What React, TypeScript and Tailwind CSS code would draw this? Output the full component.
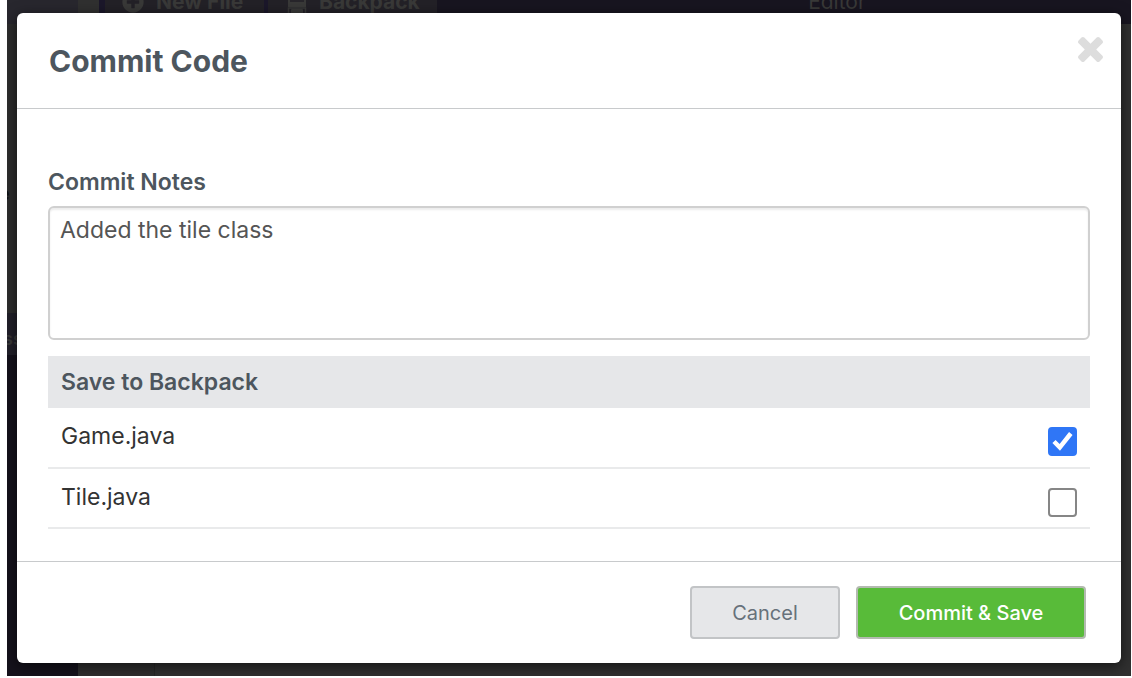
import React, { useState } from 'react';
import { FaPlusCircle } from 'react-icons/fa';

const initialFiles = [
  { name: 'Game.java', checked: true },
  { name: 'Tile.java', checked: false },
];

const CloseIcon = () => (
  <svg viewBox="302 366 1188 1188" className="size-[25px]" fill="currentColor" aria-hidden="true">
    <path d="M1490 1322q0 40-28 68l-136 136q-28 28-68 28t-68-28l-294-294-294 294q-28 28-68 28t-68-28l-136-136q-28-28-28-68t28-68l294-294-294-294q-28-28-28-68t28-68l136-136q28-28 68-28t68 28l294 294 294-294q28-28 68-28t68 28l136 136q28 28 28 68t-28 68l-294 294 294 294q28 28 28 68z" />
  </svg>
);

const BackpackIcon = () => (
  <svg viewBox="0 0 20 24" className="h-6 w-5" fill="none" aria-hidden="true">
    <path d="M4 2Q10 -1 16 2L19 8V17H1V8Z" fill="currentColor" />
    <path d="M3 11H17" stroke="#232127" strokeWidth="1.5" />
    <path d="M1.500 24V18H18.500V24" stroke="currentColor" strokeWidth="1.5" />
    <path d="M4 24V20Q4 19 5 19H15Q16 19 16 20V24Z" fill="currentColor" />
  </svg>
);

const EditorBackground = () => (
  <div className="-mt-5 flex h-[calc(100%+20px)] flex-col text-[#393938]" aria-hidden="true">
    <div className="flex h-11 shrink-0 bg-[#181520] text-[21px] font-bold">
      <div className="w-[71px] bg-[#28272e]" />
      <div className="w-[21px] bg-[#303030]" />
      <div className="w-1.5 bg-[#1b172a]" />
      <div className="flex w-[159px] items-center gap-3 bg-[#232127] pl-[17px]">
        <FaPlusCircle className="size-[22px]" />
        New File
      </div>
      <div className="w-1 bg-[#1b172a]" />
      <div className="flex w-[169px] items-center gap-3 bg-[#232127] pl-[19px]">
        <BackpackIcon />
        Backpack
      </div>
      <div className="flex flex-1 items-center justify-center pl-[106px] font-normal">Editor</div>
    </div>
    <div className="flex flex-1 bg-[#303030]">
      <div className="flex w-[71px] flex-col overflow-hidden bg-[#15121c] text-lg leading-6 font-semibold">
        <div className="h-[289px] bg-[#2d2d2d] pt-[158px]">
          <span className="-ml-2 text-[#111]">e</span>
        </div>
        <div className="h-[42px] bg-[#22202a] pt-[14px]">
          <span className="-ml-1">ss</span>
        </div>
      </div>
      <div className="w-[77px] border-r border-[#272727] bg-[#2e2e2e]" />
    </div>
  </div>
);

const App = () => {
  const [notes, setNotes] = useState('Added the tile class');
  const [files, setFiles] = useState(initialFiles);

  const toggleFile = (name: string) =>
    setFiles(files.map((file) => (file.name === name ? { ...file, checked: !file.checked } : file)));

  return (
    <div className="h-screen bg-white pr-px pb-0.5 pl-[7px] font-['Inter',sans-serif]">
      <div className="relative h-full overflow-hidden">
        <EditorBackground />
        <div
          role="dialog"
          aria-labelledby="commit-title"
          className="absolute inset-x-2.5 top-[13px] rounded-md bg-white shadow-[0_3px_14px_rgba(0,0,0,0.6)]"
        >
          <div className="flex items-start justify-between border-b border-[#c8cacc] pt-6 pr-[18px] pb-[27px] pl-8">
            <h1 id="commit-title" className="pt-1 text-[30px] leading-10 font-bold text-[#4d565e]">
              Commit Code
            </h1>
            <button type="button" aria-label="Close" className="text-[#dddddd]">
              <CloseIcon />
            </button>
          </div>
          <div className="px-[31px] pt-[57px] pb-8">
            <label htmlFor="notes" className="block text-[23px] leading-8 font-semibold text-[#4d565e]">
              Commit Notes
            </label>
            <textarea
              id="notes"
              value={notes}
              onChange={(e) => setNotes(e.target.value)}
              className="mt-2 block h-[134px] w-full resize-none rounded-md border-2 border-[#d0d0d0] px-2.5 py-1.5 text-[23px] leading-8 text-[#555555] shadow-[inset_0_2px_2px_rgba(0,0,0,0.08)] outline-none"
            />
            <table className="mt-4 w-full border-collapse text-left text-[23px] leading-8">
              <thead>
                <tr className="h-[52px] bg-[#e6e7e9] text-[#4d565e]">
                  <th colSpan={2} className="px-[13px] font-semibold">
                    Save to Backpack
                  </th>
                </tr>
              </thead>
              <tbody>
                {files.map((file) => (
                  <tr key={file.name} className="h-[60px] border-b-2 border-[#e9eaeb] align-top text-[#333333]">
                    <td className="px-[13px] pt-3">
                      <label htmlFor={file.name}>{file.name}</label>
                    </td>
                    <td className="px-[13px] pt-[19px]">
                      <div className="relative ml-auto size-[29px]">
                        <input
                          id={file.name}
                          type="checkbox"
                          checked={file.checked}
                          onChange={() => toggleFile(file.name)}
                          className="peer block size-[29px] appearance-none rounded border-2 border-[#868686] bg-white checked:border-[#2f76f6] checked:bg-[#2f76f6]"
                        />
                        <svg
                          viewBox="0 0 29 29"
                          className="pointer-events-none absolute inset-0 hidden peer-checked:block"
                          fill="none"
                          stroke="white"
                          strokeWidth="4.5"
                        >
                          <path d="M6 14.500 L11.800 20.300 L22.800 6.500" />
                        </svg>
                      </div>
                    </td>
                  </tr>
                ))}
              </tbody>
            </table>
          </div>
          <div className="flex justify-end gap-4 border-t border-[#c8cacc] py-6 pr-[35px] text-xl">
            <button
              type="button"
              className="h-[53px] w-[150px] rounded border-2 border-[#c2c4c6] bg-[#e6e7e9] text-[#67717a]"
            >
              Cancel
            </button>
            <button
              type="button"
              className="h-[53px] w-[230px] rounded border-2 border-[#b3bab0] bg-[#58bb39] font-medium text-white"
            >
              Commit &amp; Save
            </button>
          </div>
        </div>
      </div>
    </div>
  );
};

export default App;
